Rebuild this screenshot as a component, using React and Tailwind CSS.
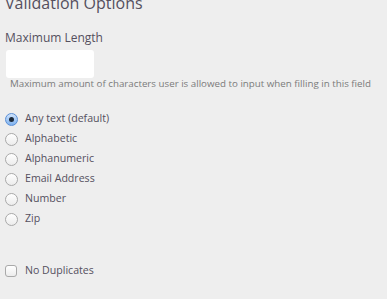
import React, { useState } from 'react';

const options = ['Any text (default)', 'Alphabetic', 'Alphanumeric', 'Email Address', 'Number', 'Zip'];

const Radio = ({ checked }) => (
  <span
    className={`flex h-[13px] w-[13px] shrink-0 items-center justify-center rounded-full border ${
      checked
        ? 'border-[#5a8fd6] bg-gradient-to-b from-[#cfe3fb] to-[#7fb2ef]'
        : 'border-[#a9a9a9] bg-gradient-to-b from-white to-[#ececec]'
    }`}
  >
    {checked && <span className="h-[5px] w-[5px] rounded-full bg-[#1c2a3a]" />}
  </span>
);

export default function App() {
  const [value, setValue] = useState(0);
  const [noDup, setNoDup] = useState(false);

  return (
    <div className="h-[299px] w-[387px] overflow-hidden bg-[#eeeeee] font-['Open_Sans',sans-serif] text-[#55505e]">
      <div className="-mt-[7px] pl-[5px]">
        {/* Title */}
        <h2 className="text-[16px] leading-[20px]">Validation Options</h2>

        {/* Maximum Length */}
        <div className="mt-[17px] text-[12px] leading-[16px]">Maximum Length</div>
        <input
          type="text"
          className="mt-[4px] ml-[1px] h-[28px] w-[88px] rounded-[3px] bg-white outline-none"
        />
        <p className="pl-[5px] text-[9.75px] leading-[12px] text-[#7b7b7b]">
          Maximum amount of characters user is allowed to input when filling in this field
        </p>

        {/* Options */}
        <div className="mt-[19px] flex flex-col">
          {options.map((opt, i) => (
            <label
              key={opt}
              onClick={() => setValue(i)}
              className="flex h-[20px] items-center gap-[7px] text-[10.6px]"
            >
              <Radio checked={value === i} />
              <span>{opt}</span>
            </label>
          ))}
        </div>

        {/* No duplicates */}
        <label
          onClick={() => setNoDup(!noDup)}
          className="mt-[32px] flex h-[20px] items-center gap-[8px] text-[10.6px]"
        >
          <span
            className={`h-[12px] w-[12px] rounded-[3px] border border-[#a9a9a9] bg-gradient-to-b from-white to-[#ececec] ${
              noDup ? 'border-[#5a8fd6]' : ''
            }`}
          />
          <span>No Duplicates</span>
        </label>
      </div>
    </div>
  );
}
